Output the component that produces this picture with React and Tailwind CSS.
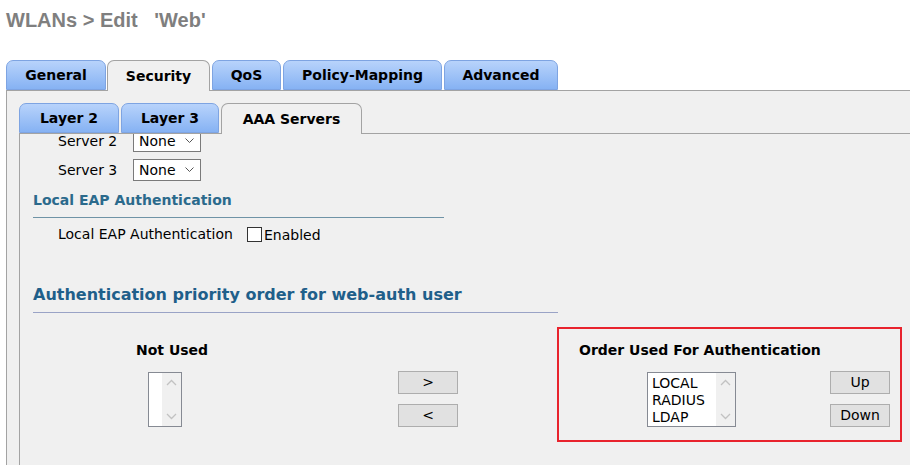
import React from "react";

const UI = { fontFamily: '"DejaVu Sans", Verdana, sans-serif' };

function Tab({ label, active, w, ml, h }) {
  if (active) {
    return (
      <div
        className={`relative z-10 -mb-px flex items-center justify-center rounded-t-[7px] border border-b-0 border-[#a3a3a3] bg-[#f0f0f0] pt-[1px] text-[14px] font-bold text-black ${w} ${ml} ${h}`}
      >
        {label}
      </div>
    );
  }
  return (
    <div
      className={`flex items-center justify-center rounded-t-[7px] border border-[#7ea4e2] bg-gradient-to-b from-[#b8d3fb] to-[#86b2f3] pt-[1px] text-[14px] font-bold text-black ${w} ${ml} ${h}`}
    >
      {label}
    </div>
  );
}

function Chevron({ up }) {
  return (
    <svg width="11" height="7" viewBox="0 0 11 7" className="block">
      {up ? (
        <polyline points="1,6 5.5,1.5 10,6" fill="none" stroke="#c2c2c2" strokeWidth="1.3" />
      ) : (
        <polyline points="1,1 5.5,5.5 10,1" fill="none" stroke="#c2c2c2" strokeWidth="1.3" />
      )}
    </svg>
  );
}

function ListBox({ items, w }) {
  return (
    <div className={`flex h-[55px] border border-[#868a93] bg-white ${w}`}>
      <div className="flex-1 pl-[4px] pt-[2px] text-[14px] leading-[17px] text-black">
        {items.map((it) => (
          <div key={it}>{it}</div>
        ))}
      </div>
      <div className="flex w-[19px] flex-col items-center justify-between bg-[#f0f0f0] py-[6px]">
        <Chevron up />
        <Chevron />
      </div>
    </div>
  );
}

function Btn({ children }) {
  return (
    <div className="flex h-[23px] w-[60px] items-center justify-center border border-[#adadad] bg-[#e1e1e1] text-[14px] text-black">
      {children}
    </div>
  );
}

function Select() {
  return (
    <div className="flex h-[22px] w-[68px] items-center justify-between border border-[#7a7a7a] bg-white pl-[5px] pr-[6px] text-[14px] text-black">
      <span>None</span>
      <svg width="9" height="6" viewBox="0 0 9 6">
        <polyline points="0.5,0.5 4.5,4.5 8.5,0.5" fill="none" stroke="#555" strokeWidth="1" />
      </svg>
    </div>
  );
}

export default function App() {
  return (
    <div className="h-[465px] w-[910px] overflow-hidden bg-white" style={UI}>
      <div
        className="pl-[6px] pt-[9px] text-[20px] font-bold leading-[22px] text-[#7f7f7f] whitespace-pre"
        style={{ fontFamily: '"Liberation Sans", Arial, sans-serif' }}
      >
        {"WLANs > Edit   'Web'"}
      </div>

      <div className="pl-[6px] pt-[29px]">
        <div className="flex items-end border-b border-[#a3a3a3]">
          <Tab label="General" w="w-[100px]" ml="" h="h-[30px]" />
          <Tab label="Security" active w="w-[103px]" ml="ml-[1px]" h="h-[31px]" />
          <Tab label="QoS" w="w-[69px]" ml="ml-[2px]" h="h-[30px]" />
          <Tab label="Policy-Mapping" w="w-[159px]" ml="ml-[2px]" h="h-[30px]" />
          <Tab label="Advanced" w="w-[114px]" ml="ml-[2px]" h="h-[30px]" />
        </div>

        <div className="h-[380px] border-l border-[#a3a3a3] bg-[#f0f0f0] pl-[12px] pt-[12px]">
          <div className="flex items-end border-b border-[#a3a3a3]">
            <Tab label="Layer 2" w="w-[100px]" ml="" h="h-[30px]" />
            <Tab label="Layer 3" w="w-[98px]" ml="ml-[2px]" h="h-[30px]" />
            <Tab label="AAA Servers" active w="w-[141px]" ml="ml-[2px]" h="h-[31px]" />
          </div>

          <div className="h-[340px] overflow-hidden border-l border-[#a3a3a3] text-[14px] text-black">
            <div className="-mt-[4px] flex h-[22px] items-center pl-[38px]">
              <span className="w-[75px]">Server 2</span>
              <Select />
            </div>
            <div className="mt-[7px] flex h-[22px] items-center pl-[38px]">
              <span className="w-[75px]">Server 3</span>
              <Select />
            </div>

            <div className="ml-[13px] mt-[10px] w-[411px] border-b border-[#6f93a6] pb-[8px] text-[14px] font-bold leading-[18px] text-[#2b6a8c]">
              Local EAP Authentication
            </div>

            <div className="mt-[7px] flex h-[18px] items-center pl-[38px]">
              <span className="w-[189px]">Local EAP Authentication</span>
              <span className="h-[15px] w-[15px] border border-[#333] bg-white" />
              <span className="ml-[2px] mt-[3px]">Enabled</span>
            </div>

            <div className="ml-[13px] mt-[41px] w-[525px] border-b border-[#9aa3c6] pb-[6px] text-[16px] font-bold leading-[22px] text-[#1f5f8a]">
              Authentication priority order for web-auth user
            </div>

            <div className="mt-[14px] flex">
              <div className="flex w-[537px]">
                <div className="ml-[116px] flex flex-col pt-[14px]">
                  <div className="text-[14px] font-bold leading-[18px]">Not Used</div>
                  <div className="ml-[12px] mt-[13px]">
                    <ListBox items={[]} w="w-[34px]" />
                  </div>
                </div>
                <div className="ml-[190px] flex flex-col gap-[10px] pt-[44px]">
                  <Btn>&gt;</Btn>
                  <Btn>&lt;</Btn>
                </div>
              </div>

              <div className="flex h-[115px] w-[345px] border-2 border-[#e8232d]">
                <div className="flex w-[271px] flex-col pl-[20px] pt-[12px]">
                  <div className="whitespace-nowrap text-[14px] font-bold leading-[18px]">Order Used For Authentication</div>
                  <div className="ml-[68px] mt-[13px]">
                    <ListBox items={["LOCAL", "RADIUS", "LDAP"]} w="w-[89px]" />
                  </div>
                </div>
                <div className="flex flex-col gap-[10px] pt-[42px]">
                  <Btn>Up</Btn>
                  <Btn>Down</Btn>
                </div>
              </div>
            </div>
          </div>
        </div>
      </div>
    </div>
  );
}
